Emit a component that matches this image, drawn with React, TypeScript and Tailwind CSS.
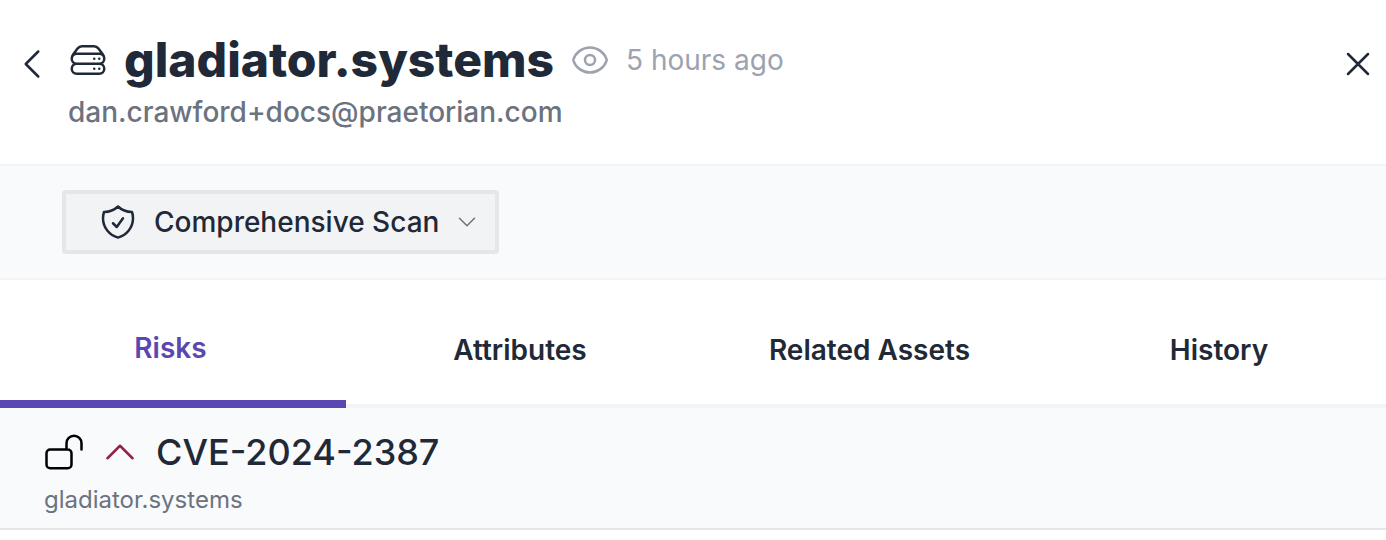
import React from "react";
import {
  HiOutlineChevronDown,
  HiOutlineChevronLeft,
  HiOutlineChevronUp,
  HiOutlineEye,
  HiOutlineLockOpen,
  HiOutlineServerStack,
  HiOutlineShieldCheck,
  HiOutlineXMark,
} from "react-icons/hi2";

type Tab = {
  label: string;
  active?: boolean;
  className: string;
};

const tabs: Tab[] = [
  { label: "Risks", active: true, className: "w-[346px] pr-[5px]" },
  { label: "Attributes", className: "w-[348px]" },
  { label: "Related Assets", className: "w-[351px]" },
  { label: "History", className: "w-[341px] pl-[7px]" },
];

function Header() {
  return (
    <header className="flex h-[166px] items-start border-b-2 border-[#f3f4f6] pl-3 pr-2">
      <button className="mt-11 shrink-0" aria-label="Back">
        <HiOutlineChevronLeft className="size-10" />
      </button>
      <div className="ml-4 flex-1 pt-9">
        <div className="flex h-12 items-center">
          <HiOutlineServerStack className="size-10 shrink-0" />
          <h1 className="ml-4 text-[48px] leading-[48px] font-extrabold whitespace-nowrap">gladiator.systems</h1>
          <div className="ml-4 flex items-center gap-4 text-[#9ca3af]">
            <HiOutlineEye className="size-10 shrink-0" />
            <span className="text-[28px] leading-10 whitespace-nowrap">5 hours ago</span>
          </div>
        </div>
        <p className="mt-2 text-[28px] leading-10 font-medium text-[#6b7280]">dan.crawford+docs@praetorian.com</p>
      </div>
      <button className="mt-11 shrink-0" aria-label="Close">
        <HiOutlineXMark className="size-10" />
      </button>
    </header>
  );
}

function ScanBar() {
  return (
    <div className="flex h-[114px] items-start border-b-2 border-[#f3f4f6] bg-[#f9fafc] pt-6 pl-[62px]">
      <button className="flex h-16 w-[437px] items-center rounded-[4px] border-4 border-[#e5e6e8] bg-[#f2f3f5] pl-8">
        <HiOutlineShieldCheck className="size-10 shrink-0" />
        <span className="ml-4 text-[28px] leading-10 font-medium whitespace-nowrap">Comprehensive Scan</span>
        <HiOutlineChevronDown className="ml-4 size-6 shrink-0 text-[#6b7280]" />
      </button>
    </div>
  );
}

function Tabs() {
  return (
    <nav className="flex h-32 bg-white">
      {tabs.map((tab) => (
        <button
          key={tab.label}
          className={`flex items-center justify-center pt-4 text-[28px] leading-10 font-semibold whitespace-nowrap ${
            tab.active ? "border-b-8 border-[#5b47b1] text-[#5b47b1]" : "border-b-4 border-[#f3f4f6]"
          } ${tab.className}`}
        >
          {tab.label}
        </button>
      ))}
    </nav>
  );
}

function RiskRow() {
  return (
    <div className="h-[122px] border-b-2 border-[#e5e6e8] bg-[#f9fafc] pt-6 pl-11">
      <div className="flex h-10 items-center">
        <HiOutlineLockOpen className="size-10 shrink-0 text-black" />
        <HiOutlineChevronUp className="ml-4 size-10 shrink-0 text-[#96214e]" />
        <span className="ml-4 text-[36px] leading-10 font-medium whitespace-nowrap">CVE-2024-2387</span>
      </div>
      <p className="mt-3 text-[24px] leading-8 text-[#6b7280]">gladiator.systems</p>
    </div>
  );
}

export default function App() {
  return (
    <main className="h-[540px] w-full overflow-hidden bg-white font-['Inter',sans-serif] text-[#1f2937]">
      <Header />
      <ScanBar />
      <Tabs />
      <RiskRow />
    </main>
  );
}
